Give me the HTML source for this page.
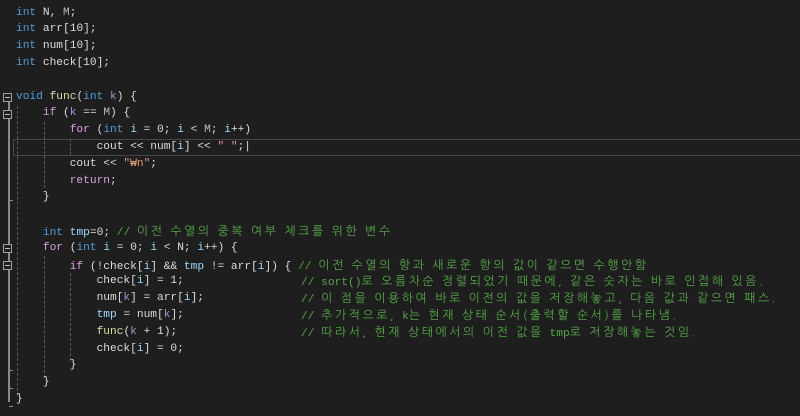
<!DOCTYPE html>
<html><head><meta charset="utf-8"><style>
html,body{margin:0;padding:0;background:#1e1e1e;width:800px;height:416px;overflow:hidden}
.l{position:absolute;left:16px;height:17px;line-height:17px;white-space:pre;font-family:"Liberation Mono","NanumGothic",monospace;font-size:11.2px;color:#dcdcdc}
.k{color:#569cd6}.c{color:#d8a0df}.f{color:#dcdcaa}.g{color:#57a64a}.v{color:#9cdcfe}.p{color:#9a9ad0}.m{color:#bebebe}.s{color:#d69d85}.e{color:#e0a070}
.h{letter-spacing:2.5px;font-size:12px;font-family:"NanumGothic","Noto Sans CJK KR",sans-serif}
.cm{position:absolute;left:301px}
.cur{position:absolute;left:13px;top:139px;width:790px;height:15px;border:1px solid #464646}
.dash{position:absolute;width:0;border-left:1px dashed #5a5a5a}
.gut{position:absolute;left:8px;width:2px;background:#8a8a8a}
.fold{position:absolute;left:3px;width:7px;height:7px;border:1px solid #a0a0a0;background:#1e1e1e}
.fold:after{content:"";position:absolute;left:1px;top:3px;width:5px;height:1px;background:#c0c0c0}
</style></head><body>
<div class="cur"></div>
<div class="gut" style="top:102px;height:300px"></div>
<div style="position:absolute;left:9px;top:370px;width:4px;height:1px;background:#8a8a8a"></div>
<div style="position:absolute;left:9px;top:388px;width:4px;height:1px;background:#8a8a8a"></div>
<div style="position:absolute;left:9px;top:406px;width:4px;height:1px;background:#8a8a8a"></div>
<div style="position:absolute;left:9px;top:200px;width:4px;height:1px;background:#8a8a8a"></div>
<div class="fold" style="top:93px"></div>
<div class="fold" style="top:110px"></div>
<div class="fold" style="top:244px"></div>
<div class="fold" style="top:261px"></div>
<div class="dash" style="left:17px;top:106px;height:290px"></div>
<div class="dash" style="left:44px;top:122px;height:66px"></div>
<div class="dash" style="left:70px;top:139px;height:16px"></div>
<div class="dash" style="left:44px;top:256px;height:122px"></div>
<div class="dash" style="left:70px;top:273px;height:88px"></div>

<div class="l" style="top:4.6px"><span class="k">int</span> N, <span class="m">M</span>;</div>
<div class="l" style="top:21.4px"><span class="k">int</span> arr[10];</div>
<div class="l" style="top:38.2px"><span class="k">int</span> num[10];</div>
<div class="l" style="top:55px"><span class="k">int</span> check[10];</div>
<div class="l" style="top:88.6px;left:16px"><span class="k">void</span> <span class="f">func</span>(<span class="k">int</span> <span class="p">k</span>) {</div>
<div class="l" style="top:105.4px">    <span class="c">if</span> (<span class="p">k</span> == <span class="m">M</span>) {</div>
<div class="l" style="top:122.2px">        <span class="c">for</span> (<span class="k">int</span> <span class="v">i</span> = 0; <span class="v">i</span> &lt; <span class="m">M</span>; <span class="v">i</span>++)</div>
<div class="l" style="top:139px">            cout &lt;&lt; num[<span class="v">i</span>] &lt;&lt; <span class="s">" "</span>;|</div>
<div class="l" style="top:155.8px">        cout &lt;&lt; <span class="s">"<span class="e">₩n</span>"</span>;</div>
<div class="l" style="top:172.6px">        <span class="c">return</span>;</div>
<div class="l" style="top:189.4px">    }</div>
<div class="l" style="top:223px">    <span class="k">int</span> <span class="v">tmp</span>=0; <span class="g">// <span class="h">이전 수열의 중복 여부 체크를 위한 변수</span></span></div>
<div class="l" style="top:239.8px">    <span class="c">for</span> (<span class="k">int</span> <span class="v">i</span> = 0; <span class="v">i</span> &lt; N; <span class="v">i</span>++) {</div>
<div class="l" style="top:256.6px">        <span class="c">if</span> (!check[<span class="v">i</span>] &amp;&amp; <span class="v">tmp</span> != arr[<span class="v">i</span>]) { <span class="g">// <span class="h">이전 수열의 항과 새로운 항의 값이 같으면 수행안함</span></span></div>
<div class="l" style="top:273.4px">            check[<span class="v">i</span>] = 1;</div>
<div class="l" style="top:290.2px">            num[<span class="p">k</span>] = arr[<span class="v">i</span>];</div>
<div class="l" style="top:307px">            <span class="v">tmp</span> = num[<span class="p">k</span>];</div>
<div class="l" style="top:323.8px">            <span class="f">func</span>(<span class="p">k</span> + 1);</div>
<div class="l cm" style="top:273.4px"><span class="g">// sort()<span class="h">로 오름차순 정렬되었기 때문에, 같은 숫자는 바로 인접해 있음.</span></span></div>
<div class="l cm" style="top:290.2px"><span class="g">// <span class="h">이 점을 이용하여 바로 이전의 값을 저장해놓고, 다음 값과 같으면 패스.</span></span></div>
<div class="l cm" style="top:307px"><span class="g">// <span class="h">추가적으로, </span>k<span class="h">는 현재 상태 순서(출력할 순서)를 나타냄.</span></span></div>
<div class="l cm" style="top:323.8px"><span class="g">// <span class="h">따라서, 현재 상태에서의 이전 값을 </span>tmp<span class="h">로 저장해놓는 것임.</span></span></div>
<div class="l" style="top:340.6px">            check[<span class="v">i</span>] = 0;</div>
<div class="l" style="top:357.4px">        }</div>
<div class="l" style="top:374.2px">    }</div>
<div class="l" style="top:391px">}</div>
</body></html>
